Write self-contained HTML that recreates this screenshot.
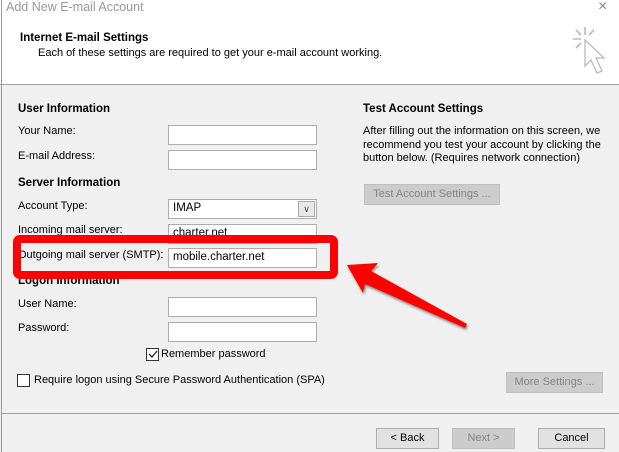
<!DOCTYPE html>
<html><head><meta charset="utf-8"><style>
*{margin:0;padding:0;box-sizing:border-box}
body{width:619px;height:452px;overflow:hidden;background:#f0f0f0;font-family:"Liberation Sans",sans-serif;font-size:11px;color:#000;position:relative}
.a{position:absolute;white-space:nowrap}
.hdr{position:absolute;left:0;top:0;width:619px;height:85px;background:#fff;border-bottom:1px solid #a0a0a0}
.in{position:absolute;left:168px;width:149px;height:20px;background:#fff;border:1px solid #adadad;padding:2px 4px;font-size:11.5px}
.b{font-weight:bold;font-size:11.5px}
.btn{position:absolute;height:21px;border:1px solid #adadad;background:#e1e1e1;text-align:center;line-height:19px}
.dis{background:#cccccc;border-color:#bfbfbf;color:#838383}
.cb{position:absolute;width:13px;height:13px;border:1px solid #333;background:#fff}
</style></head><body>
<div class="hdr"></div>
<div class="a" style="left:1px;top:0;width:1px;height:452px;background:#999"></div>
<div class="a" style="left:6px;top:0px;font-size:12.5px;color:#999">Add New E-mail Account</div>
<div class="a" style="left:598px;top:-2px;font-size:16px;color:#888">×</div>
<div class="a b" style="left:20px;top:32px">Internet E-mail Settings</div>
<div class="a" style="left:38px;top:47px">Each of these settings are required to get your e-mail account working.</div>
<svg class="a" style="left:570px;top:25px" width="40" height="52" viewBox="570 25 40 52" fill="none" stroke="#bbb" stroke-width="1.6">
<path d="M585 27v8M573 39h8M576 30l5 5M594 30l-5 5M576 48l5-5"/>
<path d="M585 40v26l6-6 6 13 5-2-6-13h8z" stroke-width="1.3"/>
</svg>
<div class="a b" style="left:18px;top:103px">User Information</div>
<div class="a" style="left:18px;top:125px">Your Name:</div>
<div class="in" style="top:125px"></div>
<div class="a" style="left:18px;top:150px">E-mail Address:</div>
<div class="in" style="top:150px"></div>
<div class="a b" style="left:18px;top:177px">Server Information</div>
<div class="a" style="left:18px;top:200px">Account Type:</div>
<div class="in" style="top:199px">IMAP</div>
<div class="a" style="left:298px;top:201px;width:17px;height:16px;border:1px solid #aaa;background:#e8e8e8;text-align:center;font-size:9px;line-height:14px;color:#444">&#8744;</div>
<div class="a" style="left:18px;top:224px">Incoming mail server:</div>
<div class="in" style="top:224px">charter.net</div>
<div class="a" style="left:18px;top:249px">Outgoing mail server (SMTP):</div>
<div class="in" style="top:248px">mobile.charter.net</div>
<div class="a b" style="left:18px;top:275px">Logon Information</div>
<div class="a" style="left:18px;top:298px">User Name:</div>
<div class="in" style="top:297px"></div>
<div class="a" style="left:18px;top:322px">Password:</div>
<div class="in" style="top:322px"></div>
<div class="cb" style="left:146px;top:348px"><svg width="11" height="11"><path d="M2 5l3 3 5-6" fill="none" stroke="#222" stroke-width="1.3"/></svg></div>
<div class="a" style="left:161px;top:348px">Remember password</div>
<div class="cb" style="left:17px;top:374px"></div>
<div class="a" style="left:34px;top:374px">Require logon using Secure Password Authentication (SPA)</div>
<div class="a b" style="left:363px;top:103px">Test Account Settings</div>
<div class="a" style="left:363px;top:125px;line-height:13.5px">After filling out the information on this screen, we<br>recommend you test your account by clicking the<br>button below. (Requires network connection)</div>
<div class="btn dis" style="left:364px;top:184px;width:136px">Test Account Settings ...</div>
<div class="btn dis" style="left:506px;top:372px;width:97px">More Settings ...</div>
<div class="a" style="left:2px;top:413px;width:617px;height:1px;background:#a0a0a0"></div>
<div class="btn" style="left:376px;top:428px;width:63px">&lt; Back</div>
<div class="btn dis" style="left:452px;top:428px;width:63px">Next &gt;</div>
<div class="btn" style="left:538px;top:428px;width:67px">Cancel</div>
<svg class="a" style="left:0;top:0" width="619" height="452">
<defs><filter id="s"><feDropShadow dx="1" dy="2" stdDeviation="1.2" flood-color="#000" flood-opacity=".45"/></filter></defs>
<rect x="17" y="239" width="317" height="36" rx="3" fill="none" stroke="#ff0000" stroke-width="8"/>
<path d="M347 265L378 263L371 271L467 324L465 328L365 284L363 293Z" fill="#ff0000" filter="url(#s)"/>
</svg>
</body></html>
